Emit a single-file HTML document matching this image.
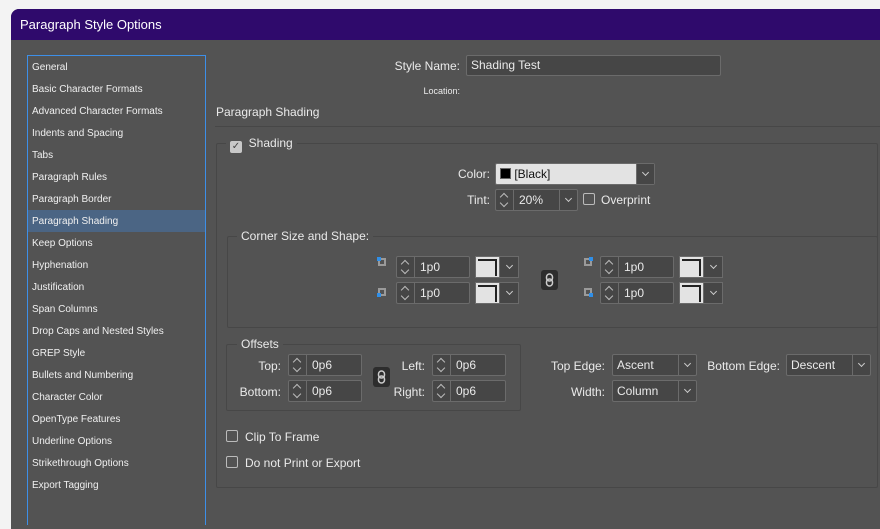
<!DOCTYPE html>
<html><head><meta charset="utf-8"><style>
*{box-sizing:border-box;margin:0;padding:0}
body{width:880px;height:511px;background:#f3f3f3;position:relative;overflow:hidden;font-family:"Liberation Sans",sans-serif;color:#eaeaea;font-size:12px}
.a{position:absolute}
#dlg{left:11px;top:9px;width:880px;height:520px;background:#535353;border-radius:8px 0 0 0;overflow:hidden}
#tb{left:0;top:0;width:100%;height:31px;background:#2f0a6c;color:#fff;font-size:13px;padding:8px 0 0 9px}
#side{left:27px;top:55px;width:179px;height:470px;border:1px solid #3d8fe8;border-bottom:none}
.it{position:absolute;left:0;width:177px;height:22px;font-size:10px;padding:6px 0 0 4px;color:#f0f0f0}
.sel{background:#4b6584}
.lbl{position:absolute;text-align:right;font-size:12px}
.box{position:absolute;background:#464646;border:1px solid #6b6b6b;border-radius:2px;height:22px;font-size:12px;padding:3px 0 0 4px}
.sp{position:absolute;background:#464646;border:1px solid #6b6b6b;border-radius:2px;height:22px}
.sp .s{position:absolute;left:0;top:0;width:18px;height:20px;border-right:1px solid #6b6b6b}
.sp .s:before{content:"";position:absolute;left:5px;top:4px;width:5px;height:5px;border-left:1px solid #bbb;border-top:1px solid #bbb;transform:rotate(45deg)}
.sp .s:after{content:"";position:absolute;left:5px;top:10px;width:5px;height:5px;border-right:1px solid #bbb;border-bottom:1px solid #bbb;transform:rotate(45deg)}
.sp .v{position:absolute;left:23px;top:3px}
.dd{position:absolute;width:18px;top:0;right:0;height:20px;border-left:1px solid #6b6b6b}
.dd:after{content:"";position:absolute;left:6px;top:6px;width:4px;height:4px;border-right:1px solid #ccc;border-bottom:1px solid #ccc;transform:rotate(45deg)}
.fs{position:absolute;border:1px solid #474747;border-radius:2px}
.leg{position:absolute;background:#535353;padding:0 4px;font-size:12px}
.cb{position:absolute;width:12px;height:12px;border:1px solid #bbb;border-radius:2px}
.sw{position:absolute;width:25px;height:22px;background:#e3e3e3;border:1px solid #6b6b6b}
.sw:after{content:"";position:absolute;left:2px;top:2px;width:17px;height:15px;border-top:2px solid #222;border-right:2px solid #222}
.swd{position:absolute;width:20px;height:22px;background:#464646;border:1px solid #6b6b6b}
.swd:after{content:"";position:absolute;left:7px;top:6px;width:4px;height:4px;border-right:1px solid #ccc;border-bottom:1px solid #ccc;transform:rotate(45deg)}
.lnk{position:absolute;width:17px;height:20px;background:#2d2d2d;border-radius:3px}
.ci{position:absolute;width:10px;height:10px}
.ci i{position:absolute;left:1px;top:1px;width:8px;height:8px;border:2px solid #9a9a9a}
.ci b{position:absolute;width:4px;height:4px;background:#2f8fe8}
</style></head><body>
<div id="dlg" class="a">
<div id="tb" class="a">Paragraph Style Options</div>
</div>
<div id="side" class="a">
<div class="it" style="top:0">General</div>
<div class="it" style="top:22px">Basic Character Formats</div>
<div class="it" style="top:44px">Advanced Character Formats</div>
<div class="it" style="top:66px">Indents and Spacing</div>
<div class="it" style="top:88px">Tabs</div>
<div class="it" style="top:110px">Paragraph Rules</div>
<div class="it" style="top:132px">Paragraph Border</div>
<div class="it sel" style="top:154px">Paragraph Shading</div>
<div class="it" style="top:176px">Keep Options</div>
<div class="it" style="top:198px">Hyphenation</div>
<div class="it" style="top:220px">Justification</div>
<div class="it" style="top:242px">Span Columns</div>
<div class="it" style="top:264px">Drop Caps and Nested Styles</div>
<div class="it" style="top:286px">GREP Style</div>
<div class="it" style="top:308px">Bullets and Numbering</div>
<div class="it" style="top:330px">Character Color</div>
<div class="it" style="top:352px">OpenType Features</div>
<div class="it" style="top:374px">Underline Options</div>
<div class="it" style="top:396px">Strikethrough Options</div>
<div class="it" style="top:418px">Export Tagging</div>
</div>

<div class="lbl" style="left:380px;top:59px;width:80px">Style Name:</div>
<div class="box" style="left:466px;top:55px;width:255px;height:21px;padding-top:2px">Shading Test</div>
<div class="lbl" style="left:400px;top:86px;width:60px;font-size:9px">Location:</div>
<div class="a" style="left:216px;top:105px;font-size:12px">Paragraph Shading</div>
<div class="a" style="left:215px;top:126px;width:665px;height:1px;background:#474747"></div>

<div class="fs" style="left:216px;top:143px;width:662px;height:345px"></div>
<div class="leg" style="left:226px;top:136px;padding-left:4px">
<span style="position:relative;display:inline-block;width:12px;height:12px;background:#c8c8c8;border-radius:2px;top:2px;color:#444;font-size:10px;line-height:12px;text-align:center">✓</span>&nbsp; Shading</div>

<div class="lbl" style="left:420px;top:167px;width:70px">Color:</div>
<div class="box" style="left:495px;top:163px;width:160px;background:#e3e3e3;color:#111;padding-top:3px"><span style="display:inline-block;width:11px;height:11px;background:#000;vertical-align:-1px;border:1px solid #666"></span> [Black]<div class="dd" style="background:#464646"></div></div>
<div class="lbl" style="left:420px;top:193px;width:70px">Tint:</div>
<div class="sp" style="left:495px;top:189px;width:83px"><div class="s"></div><div class="v">20%</div><div class="dd"></div></div>
<div class="cb" style="left:583px;top:193px"></div>
<div class="a" style="left:601px;top:193px">Overprint</div>

<div class="fs" style="left:227px;top:236px;width:651px;height:92px"></div>
<div class="leg" style="left:237px;top:229px">Corner Size and Shape:</div>

<div class="ci" style="left:377px;top:257px"><i></i><b style="left:0;top:0"></b></div>
<div class="sp" style="left:396px;top:256px;width:74px"><div class="s"></div><div class="v">1p0</div></div>
<div class="sw" style="left:475px;top:256px"></div><div class="swd" style="left:499px;top:256px"></div>
<div class="ci" style="left:377px;top:287px"><i></i><b style="left:0;top:6px"></b></div>
<div class="sp" style="left:396px;top:282px;width:74px"><div class="s"></div><div class="v">1p0</div></div>
<div class="sw" style="left:475px;top:282px"></div><div class="swd" style="left:499px;top:282px"></div>

<div class="lnk" style="left:541px;top:270px"><svg width="17" height="20"><rect x="5.5" y="4" width="6" height="7" rx="3" fill="none" stroke="#ccc" stroke-width="1.5"/><rect x="5.5" y="9" width="6" height="7" rx="3" fill="none" stroke="#ccc" stroke-width="1.5"/></svg></div>

<div class="ci" style="left:583px;top:257px"><i></i><b style="left:6px;top:0"></b></div>
<div class="sp" style="left:600px;top:256px;width:74px"><div class="s"></div><div class="v">1p0</div></div>
<div class="sw" style="left:679px;top:256px"></div><div class="swd" style="left:703px;top:256px"></div>
<div class="ci" style="left:583px;top:287px"><i></i><b style="left:6px;top:6px"></b></div>
<div class="sp" style="left:600px;top:282px;width:74px"><div class="s"></div><div class="v">1p0</div></div>
<div class="sw" style="left:679px;top:282px"></div><div class="swd" style="left:703px;top:282px"></div>

<div class="fs" style="left:226px;top:344px;width:295px;height:67px"></div>
<div class="leg" style="left:237px;top:337px">Offsets</div>
<div class="lbl" style="left:230px;top:359px;width:51px">Top:</div>
<div class="sp" style="left:288px;top:354px;width:74px"><div class="s"></div><div class="v">0p6</div></div>
<div class="lbl" style="left:230px;top:385px;width:51px">Bottom:</div>
<div class="sp" style="left:288px;top:380px;width:74px"><div class="s"></div><div class="v">0p6</div></div>
<div class="lnk" style="left:373px;top:367px"><svg width="17" height="20"><rect x="5.5" y="4" width="6" height="7" rx="3" fill="none" stroke="#ccc" stroke-width="1.5"/><rect x="5.5" y="9" width="6" height="7" rx="3" fill="none" stroke="#ccc" stroke-width="1.5"/></svg></div>
<div class="lbl" style="left:390px;top:359px;width:35px">Left:</div>
<div class="sp" style="left:432px;top:354px;width:74px"><div class="s"></div><div class="v">0p6</div></div>
<div class="lbl" style="left:380px;top:385px;width:45px">Right:</div>
<div class="sp" style="left:432px;top:380px;width:74px"><div class="s"></div><div class="v">0p6</div></div>

<div class="lbl" style="left:530px;top:359px;width:75px">Top Edge:</div>
<div class="box" style="left:612px;top:354px;width:85px">Ascent<div class="dd"></div></div>
<div class="lbl" style="left:700px;top:359px;width:80px">Bottom Edge:</div>
<div class="box" style="left:786px;top:354px;width:85px">Descent<div class="dd"></div></div>
<div class="lbl" style="left:530px;top:385px;width:75px">Width:</div>
<div class="box" style="left:612px;top:380px;width:85px">Column<div class="dd"></div></div>

<div class="cb" style="left:226px;top:430px"></div>
<div class="a" style="left:245px;top:430px">Clip To Frame</div>
<div class="cb" style="left:226px;top:456px"></div>
<div class="a" style="left:245px;top:456px">Do not Print or Export</div>
</body></html>
